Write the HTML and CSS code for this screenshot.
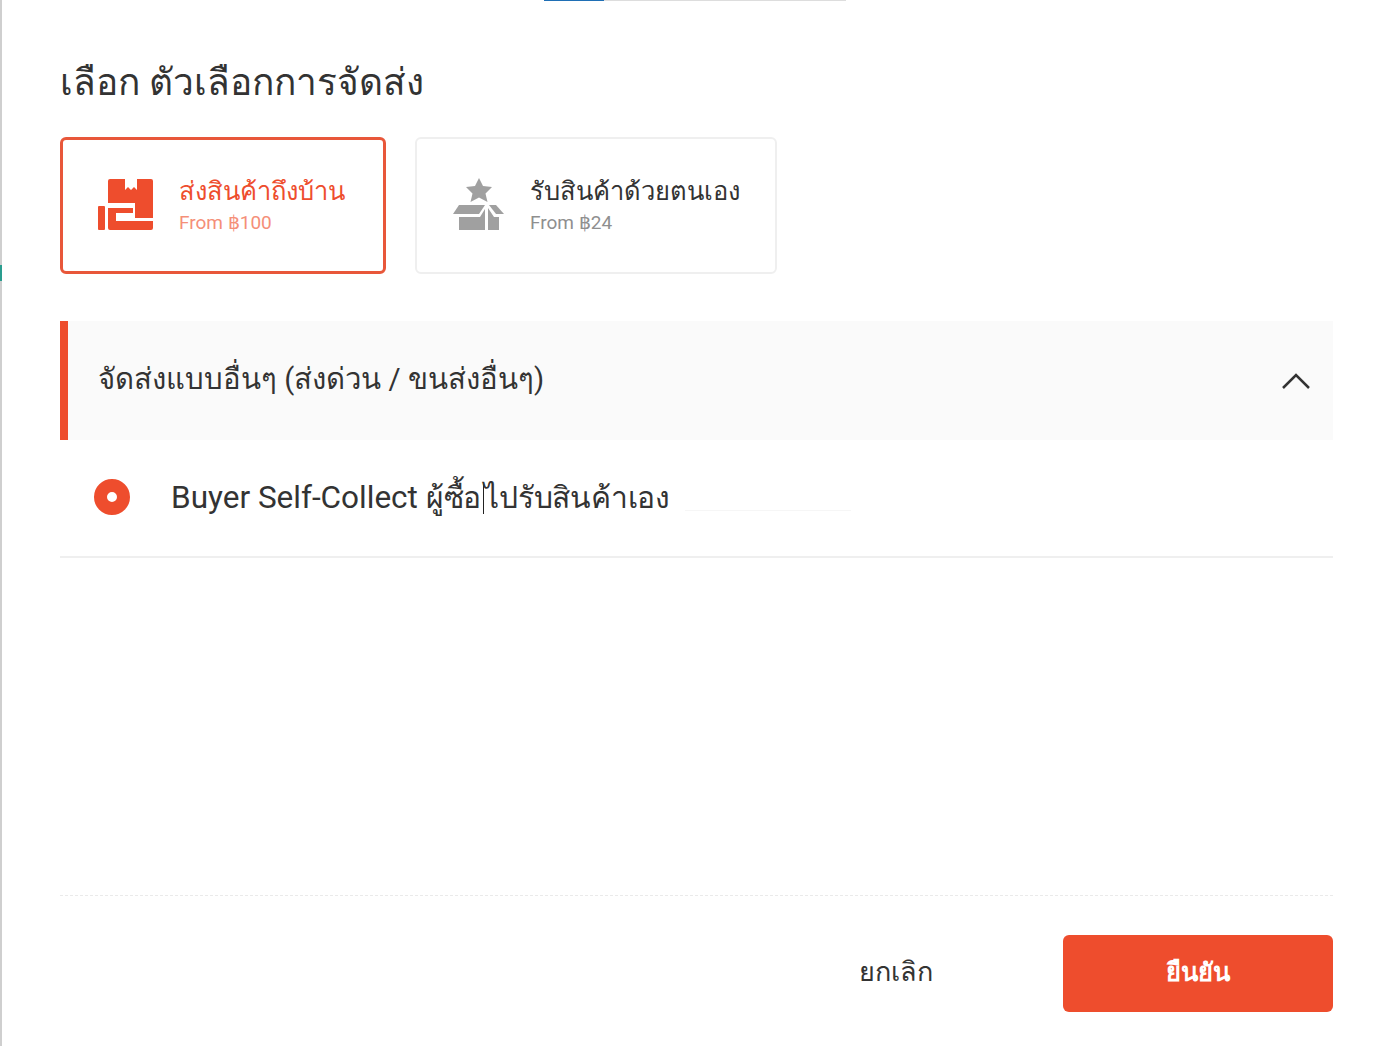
FILE: index.html
```html
<!DOCTYPE html>
<html>
<head>
  <title>เลือก ตัวเลือกการจัดส่ง</title>
  <meta charset="UTF-8">
  <link rel="stylesheet" href="styles.css">
</head>
<body>
  <div class="dialog">
    <div class="edge-mark"></div>
    <div class="progress">
      <div class="progress-done"></div>
      <div class="progress-rest"></div>
    </div>

    <h1>เลือก ตัวเลือกการจัดส่ง</h1>

    <div class="cards">
      <div class="card card-active">
        <svg class="card-icon" width="55" height="51" viewBox="0 0 55 51" fill="#ee4d2d">
          <path d="M10 2Q10 0 12 0H27V11L30 8L33 11L36 8L39 11V0H53Q55 0 55 2V39H37V24H10Z"/>
          <path d="M10 29H35V34H18V42H55V49Q55 51 53 51H12Q10 51 10 49Z"/>
          <rect x="0" y="27" width="7" height="24" rx="1"/>
        </svg>
        <div class="card-text">
          <div class="card-title">ส่งสินค้าถึงบ้าน</div>
          <div class="card-price">From ฿100</div>
        </div>
      </div>
      <div class="card card-pickup">
        <svg class="card-icon" width="52" height="54" viewBox="7 8 52 54" fill="#a0a0a0">
          <path d="M33 8L37 16L46 17L39.500 23.500L41.500 32L33 27.500L24.500 32L26.500 23.500L20 17L29 16Z"/>
          <path d="M13 35H39L33 44H7Z"/>
          <path d="M43 35H50L58 44H50Z"/>
          <path d="M13 47H34L39 39V60H13Z"/>
          <path d="M42 38L48 47H53V60H42Z"/>
        </svg>
        <div class="card-text">
          <div class="card-title">รับสินค้าด้วยตนเอง</div>
          <div class="card-price">From ฿24</div>
        </div>
      </div>
    </div>

    <div class="other-head">
      <span class="other-label">จัดส่งแบบอื่นๆ (ส่งด่วน / ขนส่งอื่นๆ)</span>
      <svg width="30" height="18" viewBox="0 0 30 18" fill="none" stroke="#333" stroke-width="2.500">
        <path d="M2 16L15 3L28 16"/>
      </svg>
    </div>

    <div class="option">
      <span class="radio"></span>
      <span class="option-text">Buyer Self-Collect <span class="option-thai">ผู้ซื้อ<span class="caret"></span>ไปรับสินค้าเอง</span></span>
      <span class="option-line"></span>
    </div>

    <div class="footer">
      <button class="btn-cancel">ยกเลิก</button>
      <button class="btn-confirm">ยืนยัน</button>
    </div>
  </div>
</body>
</html>
```

FILE: styles.css
```css
html, body {
  margin: 0;
  background-color: #fff;
}

body {
  font-family: Roboto, "Noto Sans", sans-serif;
  color: #333;
}

.dialog {
  position: relative;
  box-sizing: border-box;
  height: 1046px;
  padding: 0 55px 0 58px;
  border-left: 2px solid #cfcfcf;
}

.edge-mark {
  position: absolute;
  left: -2px;
  top: 265px;
  width: 2px;
  height: 16px;
  background-color: #2a9d8f;
}

.progress {
  display: flex;
  height: 1px;
  margin-left: 484px;
  width: 302px;
}

.progress-done {
  width: 60px;
  background-color: #1f6fb5;
}

.progress-rest {
  flex: 1;
  background-color: #ddd;
}

h1 {
  margin: 60px 0 0;
  font-size: 37px;
  font-weight: 400;
  line-height: 44px;
}

.cards {
  display: flex;
  gap: 29px;
  margin-top: 32px;
}

.card {
  display: flex;
  align-items: center;
  box-sizing: border-box;
  height: 137px;
  padding-bottom: 2px;
  border: 2px solid #efefef;
  border-radius: 6px;
}

.card-active {
  width: 326px;
  padding-left: 35px;
  border: 3px solid #e8573a;
  color: #ee4d2d;
}

.card-pickup {
  width: 362px;
  padding-left: 36px;
}

.card-icon {
  flex-shrink: 0;
  margin-right: 26px;
}

.card-pickup .card-icon {
  margin-right: 25px;
}

.card-text {
  margin-top: 4px;
}

.card-title {
  font-size: 25.500px;
  line-height: 33px;
}

.card-price {
  font-size: 19px;
  line-height: 30px;
  color: #8f8f8f;
}

.card-active .card-price {
  color: #f58f78;
}

.other-head {
  display: flex;
  align-items: center;
  justify-content: space-between;
  box-sizing: border-box;
  height: 119px;
  margin-top: 47px;
  padding: 0 22px 0 30px;
  border-left: 8px solid #ee4d2d;
  background-color: #fafafa;
  font-size: 29.300px;
}

.other-label {
  margin-bottom: 5px;
}

.option {
  display: flex;
  align-items: center;
  box-sizing: border-box;
  height: 118px;
  padding: 0 0 2px 34px;
  border-bottom: 2px solid #efefef;
  font-size: 31.500px;
}

.option-thai {
  font-size: 30px;
  letter-spacing: -0.200px;
}

.radio {
  box-sizing: border-box;
  width: 36px;
  height: 36px;
  margin-right: 41px;
  border: 13px solid #ee4d2d;
  border-radius: 50%;
  background-color: #fff;
}

.caret {
  display: inline-block;
  width: 1px;
  height: 32px;
  margin: 0 0 -6px 2px;
  background-color: #222;
}

.option-line {
  width: 166px;
  height: 1px;
  margin: 26px 0 0 15px;
  background-color: #f6f6f6;
}

.footer {
  display: flex;
  align-items: center;
  justify-content: flex-end;
  margin-top: 337px;
  padding-top: 39px;
  border-top: 1px dashed #eaeaea;
}

.btn-cancel, .btn-confirm {
  border: none;
  background: none;
  font-family: inherit;
}

.btn-cancel {
  margin-right: 130px;
  padding: 0 0 4px;
  font-size: 27px;
  color: #333;
}

.btn-confirm {
  width: 270px;
  height: 77px;
  padding-bottom: 4px;
  border-radius: 6px;
  background-color: #ee4d2d;
  color: #fff;
  font-size: 25.500px;
  font-weight: 700;
}
```
